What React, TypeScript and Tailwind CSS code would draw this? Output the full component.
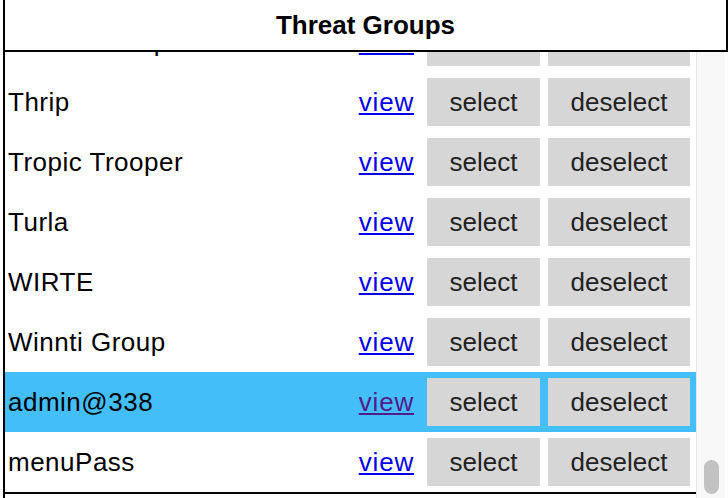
import React from "react";

type Group = { name: string; visited?: boolean; active?: boolean };

const groups: Group[] = [
  { name: "Threat Group-3390" },
  { name: "Thrip" },
  { name: "Tropic Trooper" },
  { name: "Turla" },
  { name: "WIRTE" },
  { name: "Winnti Group" },
  { name: "admin@338", visited: true, active: true },
  { name: "menuPass" },
];

function GroupRow({ group }: { group: Group }) {
  return (
    <div
      className={`flex h-[60px] items-center ${group.active ? "bg-[#43bef8]" : "bg-white"}`}
    >
      <span className="flex-1 truncate pl-[3px] tracking-[0.5px] text-black">{group.name}</span>
      <a
        href="#"
        className={`tracking-[0.8px] underline ${group.visited ? "text-[#551a8b]" : "text-[#0000ee]"}`}
      >
        view
      </a>
      <button className="ml-[13px] h-[48px] w-[113px] bg-[#d6d6d6] text-[#222]">select</button>
      <button className="ml-[8px] mr-[6px] h-[48px] w-[142px] bg-[#d6d6d6] text-[#222]">
        deselect
      </button>
    </div>
  );
}

export default function App() {
  return (
    <div className="h-[498px] w-[728px] overflow-hidden bg-white pl-[3px] font-['Liberation_Sans',Helvetica,Arial,sans-serif] text-[26px]">
      <div className="flex h-full flex-col border-l-2 border-black">
        <header className="flex h-[52px] shrink-0 items-center justify-center border-b-2 border-r-2 border-black">
          <h1 className="text-[26px] font-bold text-black">Threat Groups</h1>
        </header>

        <div className="flex min-h-0 flex-1">
          {/* list, scrolled to the bottom */}
          <div className="min-w-0 flex-1 overflow-hidden">
            <div className="-mt-[40px] border-b-2 border-black">
              {groups.map((g) => (
                <GroupRow key={g.name} group={g} />
              ))}
            </div>
          </div>

          {/* scrollbar track */}
          <div className="relative mr-[3px] w-[29px] shrink-0 border-l border-[#e6e6e6] bg-[#f8f8f8]">
            <div className="absolute left-[7px] top-[408px] h-[34px] w-[15px] rounded-full bg-[#c2c2c2]" />
          </div>
        </div>
      </div>
    </div>
  );
}
